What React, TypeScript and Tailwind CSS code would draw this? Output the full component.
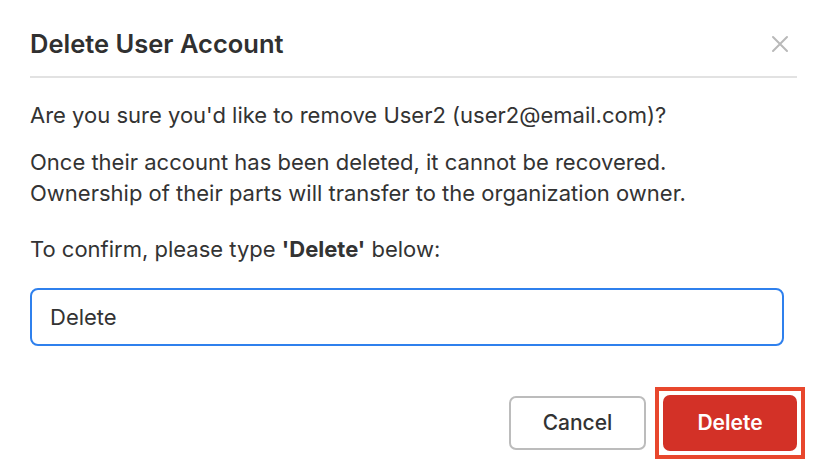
import React, { useState } from 'react';

const CloseIcon: React.FC = () => (
  <svg width="18" height="18" viewBox="0 0 18 18" fill="none" stroke="#b9b9b9" strokeWidth="2" strokeLinecap="round">
    <path d="M2 2 L16 16 M16 2 L2 16" />
  </svg>
);

export default function App() {
  const [confirmText, setConfirmText] = useState('Delete');

  return (
    <div className="w-[827px] h-[474px] bg-white font-['Inter',sans-serif] text-[#333333]">
      <div className="px-[30px] pt-[29px]">
        {/* header */}
        <div className="flex items-center justify-between pb-[17px] border-b-2 border-[#e2e2e2]">
          <h2 className="text-[25.5px] leading-[30px] font-semibold text-[#303030]">Delete User Account</h2>
          <button className="mr-[8px] text-[#b9b9b9]">
            <CloseIcon />
          </button>
        </div>

        {/* body */}
        <div className="pt-[22px] text-[22px] leading-[31px]">
          <p className="whitespace-nowrap">Are you sure you'd like to remove User2 (user2@email.com)?</p>
          <p className="mt-[16px] whitespace-nowrap">
            Once their account has been deleted, it cannot be recovered.
            <br />
            Ownership of their parts will transfer to the organization owner.
          </p>
          <p className="mt-[25px]">
            To confirm, please type <strong className="font-bold">'Delete'</strong> below:
          </p>
          <input
            value={confirmText}
            onChange={(e) => setConfirmText(e.target.value)}
            className="mt-[23px] block w-[754px] h-[58px] rounded-[8px] border-2 border-[#2f80ed] px-[18px] text-[22px] text-[#333333] outline-none"
          />
        </div>

        {/* footer */}
        <div className="flex justify-end items-center gap-[9px] mt-[41px]">
          <button className="w-[137px] h-[54px] rounded-[7px] border-2 border-[#bcbcbc] bg-white text-[21px] font-medium text-[#333333]">
            Cancel
          </button>
          <div className="-mr-[8px] border-4 border-[#e8472d] p-[4px]">
            <button className="block w-[134px] h-[56px] rounded-[7px] bg-[#d33127] text-[21px] font-semibold text-white">
              Delete
            </button>
          </div>
        </div>
      </div>
    </div>
  );
}
